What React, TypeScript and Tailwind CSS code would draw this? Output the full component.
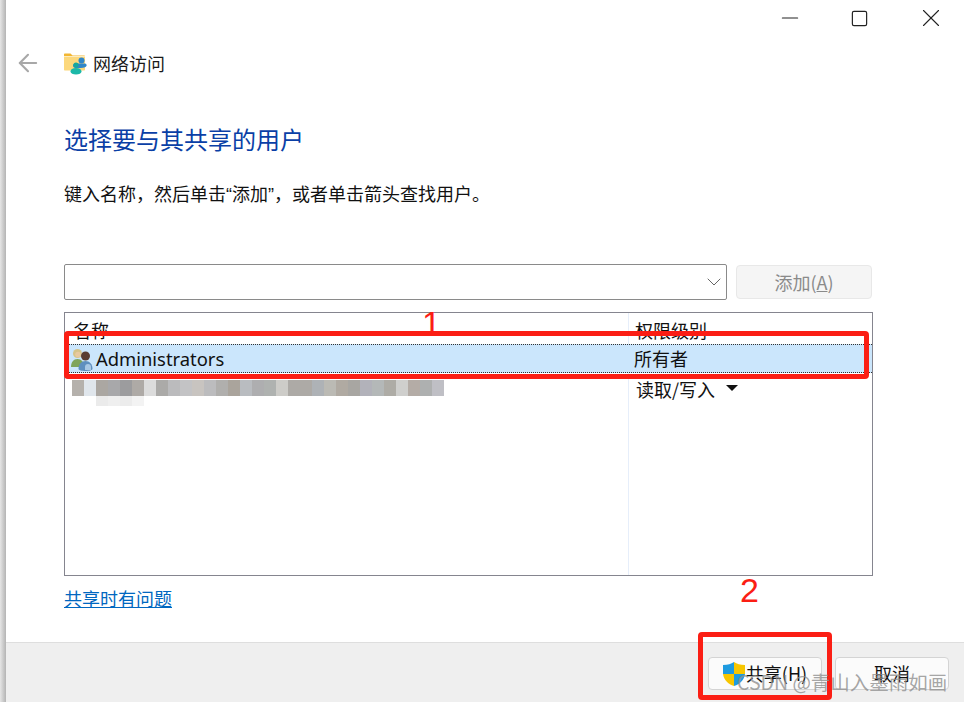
import React from 'react';
import { ArrowLeft, ChevronDown, Minus, Square, X } from 'lucide-react';

const cjk = "font-['Noto_Sans_CJK_SC','Liberation_Sans',sans-serif]";
const latin = "font-['Liberation_Sans',sans-serif]";

const mosaicTop = [
  '#b5b1ac', '#e0e6ec', '#aba7a2', '#a8a8aa', '#9c9c9e', '#aeaaa6', '#dcdcdc', '#abaaa8', '#bbbbbd', '#c3c3c5',
  '#c8c4c0', '#bcbcbe', '#b0afad', '#aaa49c', '#b9bcc0', '#aeaeb0', '#afb2b0', '#cdccc8', '#adaaa6', '#adaaa6',
  '#aeb2b6', '#bbbab4', '#b0aaa2', '#a8a6a2', '#b2b2ba', '#b4b8b8', '#aeaca6', '#cfcfcd', '#b4aca6', '#aeb0b0',
  '#bfbfc5',
];

const mosaicBottom = ['#ffffff', '#ffffff', '#ebebeb', '#efefef', '#ececec', '#f3f3f3'];

function FolderIcon() {
  return (
    <svg width="24" height="24" viewBox="0 0 24 24">
      <path d="M1 3.5c0-.6.4-1 1-1h5.5l2 2H21c.6 0 1 .4 1 1V5H1z" fill="#f2b632" />
      <path d="M1 5.5h21v13c0 .6-.4 1-1 1H2c-.6 0-1-.4-1-1z" fill="#fcd87c" />
      <circle cx="18.5" cy="9.5" r="3" fill="#2f86c9" />
      <path d="M10 14.5c0-1.2 1-2 2-2h10c1 0 1.5.8 1.500 1.700 0 1.800-2 2.800-6 2.800h-5c-1.500 0-2.500-1-2.500-2.500z" fill="#2f86c9" />
      <circle cx="13" cy="14" r="2.600" fill="#16a89d" />
      <path d="M7.500 20.500c0-2 2-3.500 5.500-3.500s5.500 1.500 5.500 3.500c0 2-2.500 3-5.500 3s-5.500-1-5.500-3z" fill="#1cb8a8" />
    </svg>
  );
}

function UsersIcon() {
  return (
    <svg width="24" height="24" viewBox="0 0 24 24">
      <circle cx="7.500" cy="6.500" r="4.500" fill="#d6c48a" />
      <circle cx="8" cy="7.500" r="2.800" fill="#e8c9a0" />
      <path d="M1 20c0-5 2.500-8 6.500-8s6.500 3 6.500 8z" fill="#7fa45a" />
      <circle cx="15.500" cy="9" r="4.500" fill="#5a3c30" />
      <path d="M8.500 22c0-5 3-8 7-8s7 3 7 8c0 1-3 2-7 2s-7-1-7-2z" fill="#5f8fbe" />
      <path d="M15 20a3 3 0 0 1 6 0v3h-6z" fill="#a9c8e4" />
    </svg>
  );
}

function ShieldIcon() {
  return (
    <svg width="22" height="24" viewBox="0 0 22 24">
      <path d="M11 0c3 2 6 3 11 3v9H11z" fill="#f7c600" />
      <path d="M11 0C8 2 5 3 0 3v9h11z" fill="#1e9be0" />
      <path d="M0 12h11v12C5 22 1 18 0 12z" fill="#f7c600" />
      <path d="M22 12H11v12c6-2 10-6 11-12z" fill="#1e9be0" />
    </svg>
  );
}

export default function App() {
  return (
    <div className={`flex h-[702px] w-[964px] overflow-hidden bg-white ${cjk}`}>
      <div className="w-[6px] shrink-0 bg-gradient-to-r from-[#e6e6e6] to-[#b4b4b4]" />

      <div className="relative flex min-w-0 flex-1 flex-col">
        {/* title bar */}
        <div className="flex h-[36px] shrink-0 justify-end pr-[10px]">
          <div className="flex h-full w-[46px] items-center justify-center">
            <Minus className="text-[#222]" size={26} strokeWidth={1.100} />
          </div>
          <div className="ml-[23px] flex h-full w-[46px] items-center justify-center">
            <Square className="text-[#222]" size={19} strokeWidth={1.500} />
          </div>
          <div className="ml-[26px] flex h-full w-[46px] items-center justify-center">
            <X className="text-[#222]" size={30} strokeWidth={0.900} />
          </div>
        </div>

        {/* nav row */}
        <div className="mt-[13px] flex h-[28px] shrink-0 items-center pl-[8px]">
          <ArrowLeft className="text-[#a8a8a8]" size={28} strokeWidth={1.800} />
          <div className="ml-[21px]">
            <FolderIcon />
          </div>
          <span className="ml-[6px] text-[18px] text-[#1a1a1a]">网络访问</span>
        </div>

        <div className="flex flex-1 flex-col pl-[58px] pr-[91px]">
          <h1 className="mt-[45px] text-[24px] leading-[34px] font-normal whitespace-nowrap text-[#0a3fa6]">
            选择要与其共享的用户
          </h1>
          <p className="mt-[25px] text-[18px] leading-[24px] whitespace-nowrap text-[#111]">
            键入名称，然后单击<span className={latin}>“</span>添加<span className={latin}>”</span>，或者单击箭头查找用户。
          </p>

          {/* add user */}
          <div className="mt-[57px] flex h-[36px] w-[808px] shrink-0 items-center gap-[9px]">
            <div className="flex h-[36px] w-[663px] items-center justify-end rounded-[2px] border border-[#8a8a8a]">
              <ChevronDown className="text-[#666]" size={24} strokeWidth={1} />
            </div>
            <div className="flex h-[34px] w-[136px] items-center justify-center rounded-[4px] border border-[#e8e8e8] bg-[#f5f5f5] text-[18px] text-[#8a8a8a]">
              <span>
                添加(<span className="underline">A</span>)
              </span>
            </div>
          </div>

          {/* list */}
          <div className="mt-[12px] flex h-[264px] w-[809px] shrink-0 flex-col border border-[#85858f]">
            <div className="flex h-[31px] shrink-0 text-[18px] leading-[22px] text-[#111]">
              <div className="w-[563px] pl-[8px] pt-[6px]">名称</div>
              <div className="h-full flex-1 border-l border-[#e6eefa] pl-[6px] pt-[6px]">权限级别</div>
            </div>
            <div className="flex h-[29px] shrink-0 items-center border-y border-dotted border-[#333] bg-[#cbe6fc] text-[18.400px] text-[#111]">
              <div className="flex w-[563px] items-center pl-[5px]">
                <UsersIcon />
                <span className="ml-[2px] font-['Noto_Sans','Liberation_Sans',sans-serif]">Administrators</span>
              </div>
              <div className="pl-[6px] text-[18px]">所有者</div>
            </div>
            <div className="flex min-h-0 flex-1">
              <div className="w-[563px] pl-[7px] pt-[7px]">
                <div className="flex">
                  {mosaicTop.map((color, i) => (
                    <div key={i} className="h-[16px] w-[12px]" style={{ backgroundColor: color }} />
                  ))}
                </div>
                <div className="flex">
                  {mosaicBottom.map((color, i) => (
                    <div key={i} className="h-[10px] w-[12px]" style={{ backgroundColor: color }} />
                  ))}
                </div>
              </div>
              <div className="flex h-full flex-1 border-l border-[#e6eefa] pl-[7px] pt-[3px]">
                <span className="text-[18px] leading-[26px] text-[#111]">读取/写入</span>
                <div className="ml-[11px] mt-[9px] h-0 w-0 border-x-[6px] border-t-[6px] border-x-transparent border-t-[#111]" />
              </div>
            </div>
          </div>

          <div className="mt-[10px] text-[18px] leading-[24px] text-[#0067c0] underline">共享时有问题</div>
        </div>

        {/* footer */}
        <div className="flex h-[60px] shrink-0 items-start justify-end gap-[13px] border-t border-[#dedede] bg-[#efefef] pr-[15px] pt-[14px]">
          <div className="flex h-[33px] w-[114px] items-center justify-center rounded-[4px] border border-[#d4d4d4] bg-[#fbfbfb] text-[18px] text-[#111]">
            <span className="mr-[1px]">
              <ShieldIcon />
            </span>
            共享(H)
          </div>
          <div className="flex h-[33px] w-[114px] items-center justify-center rounded-[4px] border border-[#d4d4d4] bg-[#fbfbfb] text-[18px] text-[#111]">
            取消
          </div>
        </div>

        {/* red annotations */}
        <div className="pointer-events-none absolute left-[58px] top-[331px] h-[48px] w-[805px] rounded-[4px] border-[5px] border-[#fb1e14]" />
        <div className="pointer-events-none absolute left-[692px] top-[632px] h-[68px] w-[134px] rounded-[4px] border-[5px] border-[#fb1e14]" />
        <span className={`absolute left-[416px] top-[303px] text-[34px] leading-[40px] text-[#fb1e14] ${latin}`}>1</span>
        <span className={`absolute left-[734px] top-[570px] text-[34px] leading-[40px] text-[#fb1e14] ${latin}`}>2</span>

        {/* watermark */}
        <span className="absolute left-[731px] top-[670px] text-[19.500px] leading-[24px] whitespace-nowrap text-[#8f8f8f]/80">
          CSDN @青山入墨雨如画
        </span>
      </div>
    </div>
  );
}
